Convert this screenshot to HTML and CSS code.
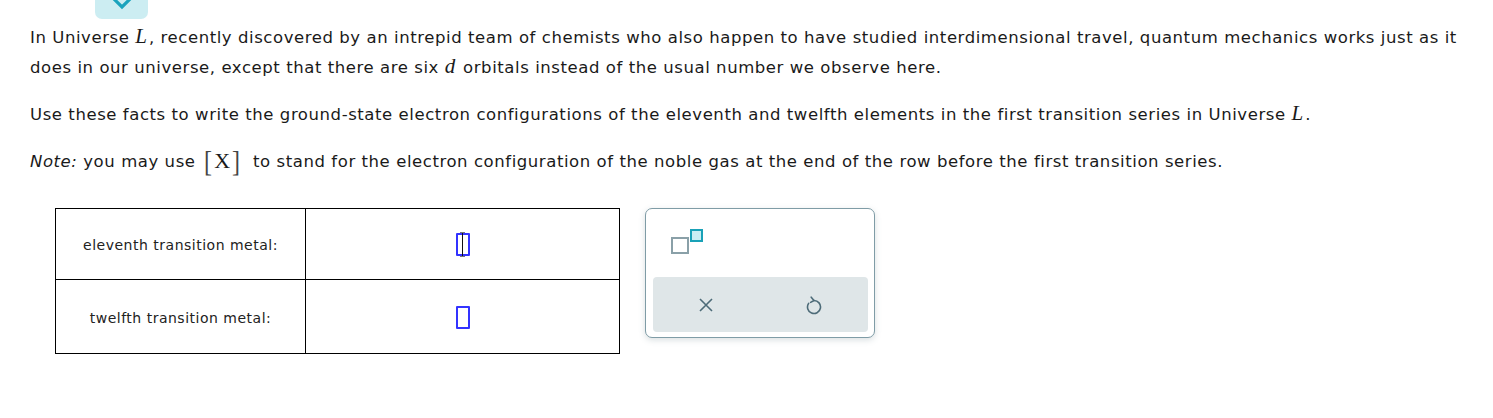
FILE: index.html
```html
<!DOCTYPE html>
<html>
<head>
<meta charset="utf-8">
<link rel="stylesheet" href="styles.css">
</head>
<body>
<div class="page">
  <div class="collapse-btn">
    <svg width="24" height="12" viewBox="0 0 24 12"><path d="M3 -2 L12 7 L21 -2" fill="none" stroke="#1aa3bd" stroke-width="3.2"/></svg>
  </div>
  <div class="content">
    <p class="para first">In Universe <span class="m">L</span>, recently discovered by an intrepid team of chemists who also happen to have studied interdimensional travel, quantum mechanics works just as it does in our universe, except that there are six <span class="m">d</span> orbitals instead of the usual number we observe here.</p>
    <p class="para">Use these facts to write the ground-state electron configurations of the eleventh and twelfth elements in the first transition series in Universe <span class="m">L</span>.</p>
    <p class="para"><em>Note:</em> you may use <span class="bx"><span class="br">[</span><span class="x">X</span><span class="br">]</span></span> to stand for the electron configuration of the noble gas at the end of the row before the first transition series.</p>
    <div class="work">
      <table class="answers">
        <tr class="r1">
          <td class="label">eleventh transition metal:</td>
          <td class="field"><span class="box active"><span class="caret"></span></span></td>
        </tr>
        <tr class="r2">
          <td class="label">twelfth transition metal:</td>
          <td class="field"><span class="box"></span></td>
        </tr>
      </table>
      <div class="tools">
        <div class="sup-icon"><span class="base"></span><span class="exp"></span></div>
        <div class="tool-bar">
          <svg width="14" height="14" viewBox="0 0 14 14"><path d="M1 1 L13 13 M13 1 L1 13" stroke="#4d6b78" stroke-width="1.6" fill="none"/></svg>
          <svg width="18" height="20" viewBox="0 0 18 20"><path d="M9 5.5 A6.5 6.5 0 1 1 3.6 8.4" fill="none" stroke="#4d6b78" stroke-width="1.6" stroke-linecap="round"/><path d="M6.2 2.2 L9 5.5 L5.6 7.4" fill="none" stroke="#4d6b78" stroke-width="1.6" stroke-linejoin="round" stroke-linecap="round"/></svg>
        </div>
      </div>
    </div>
  </div>
</div>
</body>
</html>
```
FILE: styles.css
```css
html, body { margin: 0; padding: 0; background: #fff; }
body { font-family: "DejaVu Sans", Verdana, sans-serif; color: #1a1a1a; }
.page { position: relative; width: 1493px; height: 418px; overflow: hidden; }
.collapse-btn {
  margin-left: 95px; width: 53px; height: 19px;
  background: #ccedf2; border-radius: 0 0 7px 7px;
  display: flex; justify-content: center; align-items: flex-start;
}
.content { padding-left: 30px; padding-top: 4px; }
.para { margin: 0 0 17px 0; font-size: 16.5px; letter-spacing: 0.57px; line-height: 30px; width: 1440px; }
.para em { font-style: italic; }
.m { font-family: "Liberation Serif", "Times New Roman", serif; font-style: italic; font-size: 21px; line-height: 20px; letter-spacing: 0; padding-right: 2px; }
.bx { display: inline-flex; align-items: center; vertical-align: middle; margin: 0 6px 0 2px; position: relative; top: -2px; line-height: 20px; height: 20px; letter-spacing: 0; }
.br { font-family: "Liberation Serif", serif; font-size: 30px; color: #444; line-height: 20px; transform: scaleX(0.8); }
.x { font-family: "Liberation Serif", serif; font-size: 22px; line-height: 20px; padding: 0 1px; }
.work { display: flex; align-items: flex-start; gap: 25px; margin-left: 25px; margin-top: 31px; }
.answers { border-collapse: collapse; }
.answers td { border: 1px solid #000; padding: 0; }
.label { width: 249px; text-align: center; font-size: 14px; letter-spacing: 0.5px; color: #222; }
.field { width: 313px; text-align: center; }
.r1 { height: 71px; }
.r2 { height: 74px; }
.r1 .label { padding-top: 2px; }
.r2 .label { padding-top: 2px; }
.box {
  display: inline-block; width: 10px; height: 19px;
  border: 2px solid #3333ff; border-radius: 1px; position: relative; vertical-align: middle;
}
.r2 .box { top: 1px; }
.caret {
  position: absolute; left: 4px; top: -3px; width: 1px; height: 25px; background: #111;
}
.caret::before, .caret::after {
  content: ""; position: absolute; left: -2px; width: 5px; height: 1px; background: #777;
}
.caret::before { top: 0; }
.caret::after { bottom: 0; }
.tools {
  width: 230px; height: 130px; box-sizing: border-box;
  border: 1px solid #7f9ca6; border-radius: 7px;
  box-shadow: 0 2px 6px rgba(80,110,120,0.22);
  padding: 20px 6px 6px 7px; background: #fff;
}
.sup-icon { position: relative; height: 48px; margin-left: 18px; }
.sup-icon .base {
  position: absolute; left: 0; top: 8px; width: 14px; height: 13px;
  border: 2px solid #8aa0a8; background: #fff;
}
.sup-icon .exp {
  position: absolute; left: 19px; top: 0; width: 9px; height: 9px;
  border: 2px solid #19a1b7; background: #c9eef3;
}
.tool-bar {
  height: 55px; background: #dfe6e8; border-radius: 4px;
  display: flex; align-items: center; justify-content: space-between; padding: 0 45px 0 46px;
}
```
